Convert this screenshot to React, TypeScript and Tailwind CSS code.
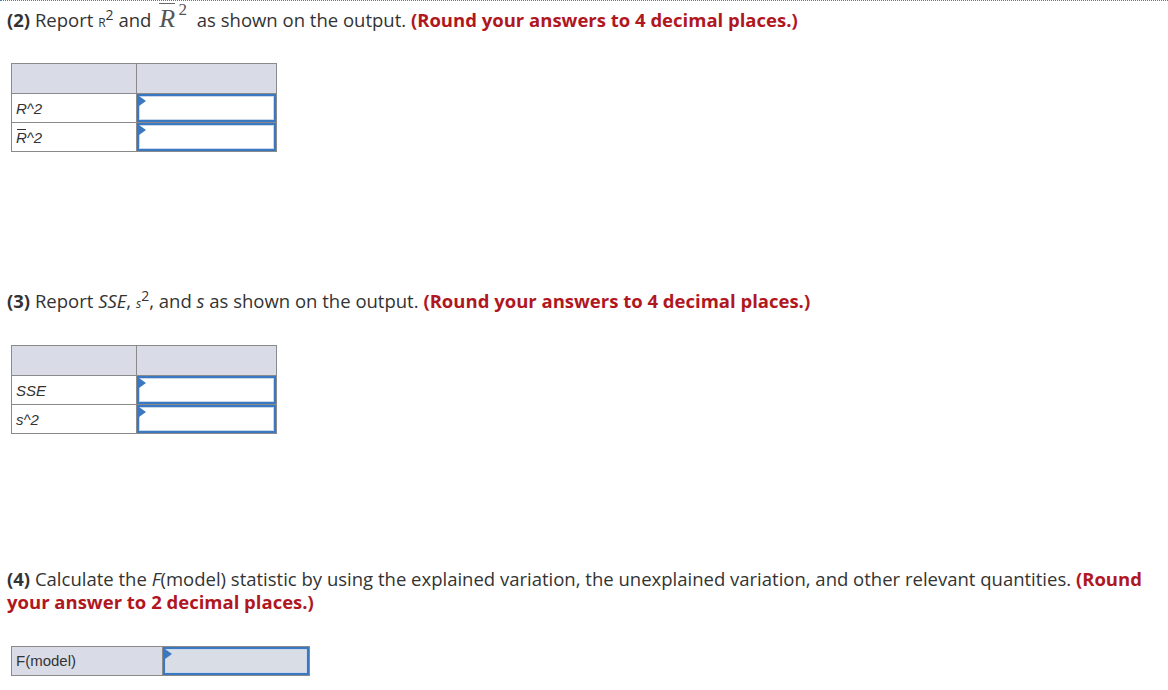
import React from "react";

const INK = "text-[#333333]";

function Flag() {
  return (
    <span className="absolute left-0 top-0 w-0 h-0 border-t-[5px] border-b-[5px] border-l-[7px] border-t-transparent border-b-transparent border-l-[#3b78c2]" />
  );
}

function AnswerBox({ shaded = false }: { shaded?: boolean }) {
  return (
    <div
      className={`relative h-full w-full border-2 border-[#3b78c2] ${shaded ? "bg-[#d9dde6]" : "bg-white"}`}
    >
      <div className="absolute inset-0 border border-[#c9d7ea]" />
      <Flag />
    </div>
  );
}

function AnswerTable({ rows }: { rows: React.ReactNode[] }) {
  return (
    <table className="ml-[4px] border-collapse font-['Liberation_Sans',Arial,sans-serif] text-[15px] text-[#333333]">
      <tbody>
        <tr className="h-[30px] bg-[#d9dce6]">
          <td className="w-[125px] border border-[#8a8a8a]" />
          <td className="w-[140px] border border-[#8a8a8a]" />
        </tr>
        {rows.map((label, i) => (
          <tr key={i} className="h-[29px]">
            <td className="border border-[#8a8a8a] px-[4px] align-middle italic leading-none">{label}</td>
            <td className="h-[29px] border border-[#8a8a8a] p-0">
              <AnswerBox />
            </td>
          </tr>
        ))}
      </tbody>
    </table>
  );
}

function Bold({ children }: { children: React.ReactNode }) {
  return <span className="font-bold text-[#333333]">{children}</span>;
}

function Red({ children }: { children: React.ReactNode }) {
  return <span className="font-bold text-[#b0171f]">{children}</span>;
}

export default function App() {
  return (
    <main className={`min-h-screen bg-white ${INK} font-['Open_Sans','Lato',sans-serif] text-[18.5px]`}>
      <div className="border-t border-dotted border-[#3b7dc4]" />

      {/* part 2 */}
      <section className="px-[7px] pt-[4px]">
        <p className="leading-[30px]">
          <Bold>(2)</Bold> Report <span className="text-[12px]">R</span>
          <sup className="text-[14px]">2</sup> and{" "}
          <span className="relative ml-[3px] mr-[17px] inline-block font-['Liberation_Serif',serif] text-[26px] italic leading-none text-[#555]">
            <span className="border-t border-[#666]">R</span>
            <span className="absolute -right-[12px] -top-[5px] text-[17px] leading-none not-italic">2</span>
          </span>{" "}
          as shown on the output. <Red>(Round your answers to 4 decimal places.)</Red>
        </p>
        <div className="mt-[25px]">
          <AnswerTable
            rows={[
              "R^2",
              <span key="rb" className="relative">
                <span className="absolute left-[1px] top-[0px] h-px w-[9px] bg-[#333]" />
                R^2
              </span>,
            ]}
          />
        </div>
      </section>

      {/* part 3 */}
      <section className="px-[7px] pt-[134px]">
        <p className="leading-[30px]">
          <Bold>(3)</Bold> Report <i>SSE</i>, <i className="text-[12px]">s</i>
          <sup className="text-[14px]">2</sup>, and <i>s</i> as shown on the output.{" "}
          <Red>(Round your answers to 4 decimal places.)</Red>
        </p>
        <div className="mt-[26px]">
          <AnswerTable rows={["SSE", "s^2"]} />
        </div>
      </section>

      {/* part 4 */}
      <section className="px-[7px] pt-[133px]">
        <p className="leading-[23px]">
          <Bold>(4)</Bold> Calculate the <i>F</i>(model) statistic by using the explained variation, the unexplained
          variation, and other relevant quantities.{" "}
          <Red>
            (Round
            <br />
            your answer to 2 decimal places.)
          </Red>
        </p>
        <div className="mt-[33px] ml-[4px] flex h-[30px] w-[299px] border border-[#8a8a8a] bg-[#d9dce6] font-['Liberation_Sans',Arial,sans-serif] text-[15px]">
          <div className="flex w-[151px] items-center border-r border-[#8a8a8a] px-[4px]">F(model)</div>
          <div className="flex-1">
            <AnswerBox shaded />
          </div>
        </div>
      </section>
    </main>
  );
}
